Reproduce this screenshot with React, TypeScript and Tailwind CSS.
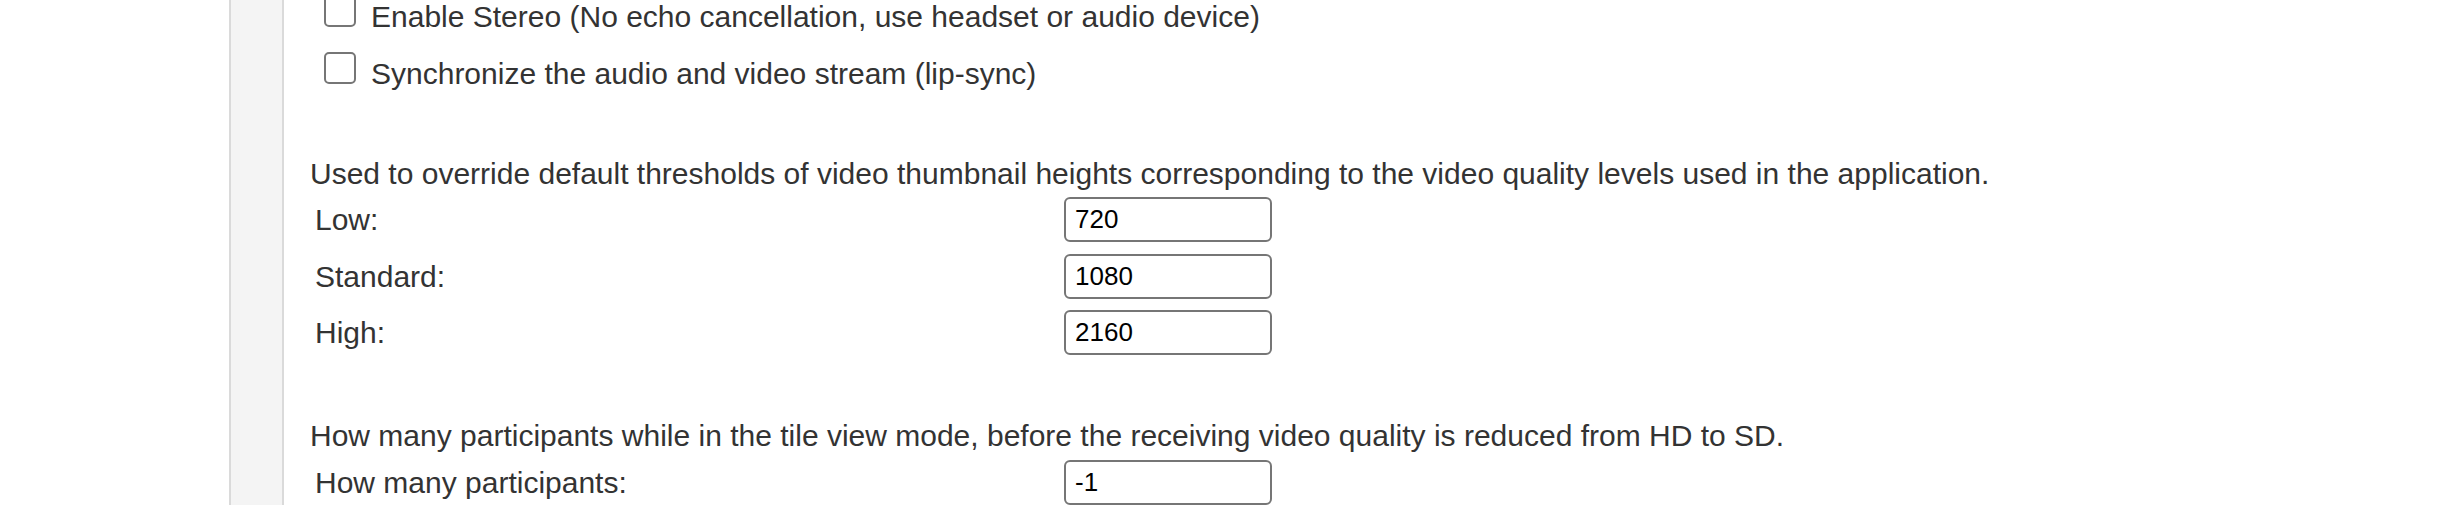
import { useState } from "react";

const thresholds = [
  { name: "low", label: "Low:", value: "720" },
  { name: "standard", label: "Standard:", value: "1080" },
  { name: "high", label: "High:", value: "2160" },
];

function CheckRow({ label }: { label: string }) {
  const [checked, setChecked] = useState(false);
  return (
    <label className="flex h-[57px] items-start gap-[15px] pl-[14px]">
      <input
        type="checkbox"
        checked={checked}
        onChange={(e) => setChecked(e.target.checked)}
        className="m-0 h-[32px] w-[32px] shrink-0 appearance-none rounded-[5px] border-[2.5px] border-[#767676] bg-white checked:bg-[#0075ff]"
      />
      <span className="leading-[44px]">{label}</span>
    </label>
  );
}

function FieldRow({ label, defaultValue }: { label: string; defaultValue: string }) {
  return (
    <div className="flex h-[45px] items-center">
      <span className="w-[754px] shrink-0 pl-[5px]">{label}</span>
      <input
        type="text"
        defaultValue={defaultValue}
        className="h-[45px] w-[208px] rounded-[6px] border-2 border-[#767676] bg-white px-[9px] text-[26px] text-black outline-none"
        style={{ fontFamily: '"Liberation Sans", Arial, sans-serif' }}
      />
    </div>
  );
}

export default function App() {
  return (
    <div
      className="flex h-[505px] w-full overflow-hidden bg-white text-[30px] text-[#333]"
      style={{ fontFamily: '"Liberation Sans", Arial, sans-serif' }}
    >
      <div className="w-[229px] shrink-0" />
      <div className="w-[55px] shrink-0 border-x-2 border-[#dadada] bg-[#f4f4f4]" />

      <div className="flex-1 pl-[26px]">
        <div className="-mt-[5px]">
          <CheckRow label="Enable Stereo (No echo cancellation, use headset or audio device)" />
          <CheckRow label="Synchronize the audio and video stream (lip-sync)" />
        </div>

        <p className="mt-[43px] leading-[44px]">
          Used to override default thresholds of video thumbnail heights corresponding to the video quality levels used in the application.
        </p>
        <div className="mt-[1px] flex flex-col gap-[11.5px]">
          {thresholds.map((t) => (
            <FieldRow key={t.name} label={t.label} defaultValue={t.value} />
          ))}
        </div>

        <p className="mt-[59px] leading-[44px]">
          How many participants while in the tile view mode, before the receiving video quality is reduced from HD to SD.
        </p>
        <div className="mt-[2px]">
          <FieldRow label="How many participants:" defaultValue="-1" />
        </div>
      </div>
    </div>
  );
}
